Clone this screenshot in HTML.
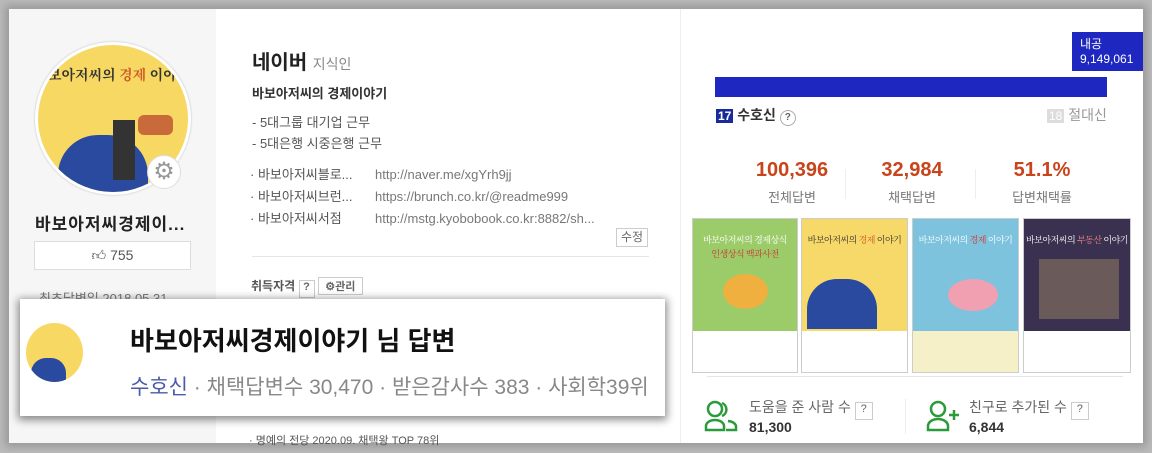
<!DOCTYPE html>
<html><head><meta charset="utf-8"><style>
*{margin:0;padding:0;box-sizing:border-box}
body{width:1152px;height:453px;overflow:hidden;background:#fff;font-family:"Liberation Sans","Noto Sans CJK KR",sans-serif;position:relative}
.frame{position:absolute;left:0;top:0;width:1152px;height:453px;background:#bbb}
.panel{position:absolute;left:9px;top:9px;width:1134px;height:434px;background:#fff;box-shadow:0 0 8px 4px #999}
.left{position:absolute;left:0;top:0;width:207px;height:434px;background:#f6f6f6}
.abs{position:absolute}
.circle{border-radius:50%;overflow:hidden;background:#f7d862}
.t{position:absolute;white-space:nowrap}
.book{position:absolute;top:209px;height:155px;border:1px solid #ccc;overflow:hidden;background:#fff}
.book .top{position:absolute;left:0;top:0;width:100%;height:112px}
.book .tt{position:absolute;top:14px;width:100%;text-align:center;font-family:"Noto Serif CJK SC",serif;font-size:9px;letter-spacing:-0.5px;line-height:14px}
.q{display:inline-block;border:1px solid #ccc;background:#fff;color:#666;font-size:11px;text-align:center}
</style></head><body>
<div class="frame"></div>
<div class="panel">
 <div class="left"></div>
 <div class="abs circle" style="left:26px;top:33px;width:156px;height:153px;border:3px solid #fff;box-shadow:0 0 2px #bbb">
  <div class="t" style="left:10px;top:20px;font-size:14px;color:#333;font-family:'Noto Serif CJK SC',serif;font-weight:bold">보아저씨의 <span style="color:#d05a2a">경제</span> 이야</div>
  <div class="abs" style="left:20px;top:90px;width:90px;height:70px;background:#2a4aa0;border-radius:40px 40px 0 0"></div>
  <div class="abs" style="left:75px;top:75px;width:22px;height:60px;background:#333"></div>
  <div class="abs" style="left:100px;top:70px;width:35px;height:20px;background:#c86a3a;border-radius:6px"></div>
 </div>
 <div class="abs" style="left:138px;top:146px;width:34px;height:34px;border-radius:50%;background:#fff;border:1px solid #ddd;color:#999;font-size:24px;text-align:center;line-height:32px">⚙</div>
 <div class="t" style="left:26px;top:201px;font-size:17px;font-weight:bold;color:#222;letter-spacing:1px">바보아저씨경제이...</div>
 <div class="abs" style="left:25px;top:232px;width:157px;height:29px;background:#fff;border:1px solid #ddd;text-align:center;font-size:14px;line-height:27px;color:#555">👍︎ 755</div>
 <div class="t" style="left:30px;top:279px;font-size:13px;color:#777">최초답변일 2018.05.31.</div>

 <div class="t" style="left:243px;top:37px;font-size:20px;font-weight:bold;color:#222">네이버 <span style="font-size:14px;font-weight:normal;color:#888">지식인</span></div>
 <div class="t" style="left:243px;top:74px;font-size:13px;font-weight:bold;color:#333">바보아저씨의 경제이야기</div>
 <div class="t" style="left:243px;top:103px;font-size:13px;color:#555;line-height:21px">- 5대그룹 대기업 근무<br>- 5대은행 시중은행 근무</div>
 <div class="t" style="left:241px;top:155px;font-size:13px;color:#555;line-height:22px">· 바보아저씨블로...<br>· 바보아저씨브런...<br>· 바보아저씨서점</div>
 <div class="t" style="left:366px;top:155px;font-size:13px;color:#777;line-height:22px">http://naver.me/xgYrh9jj<br>https://brunch.co.kr/@readme999<br>http://mstg.kyobobook.co.kr:8882/sh...</div>
 <div class="abs q" style="left:607px;top:219px;width:32px;height:19px;font-size:12px;line-height:17px">수정</div>
 <div class="abs" style="left:243px;top:247px;width:397px;height:1px;background:#e5e5e5"></div>
 <div class="t" style="left:242px;top:268px;font-size:12px;font-weight:bold;color:#555">취득자격 <span class="q" style="width:16px;height:18px">?</span> <span class="q" style="width:45px;height:18px">⚙관리</span></div>
 <div class="t" style="left:240px;top:423px;font-size:11px;color:#555">· 명예의 전당 2020.09. 채택왕 TOP 78위</div>
 <div class="abs" style="left:671px;top:0;width:1px;height:434px;background:#eee"></div>

 <div class="abs" style="left:706px;top:68px;width:392px;height:20px;background:#1e28c0"></div>
 <div class="abs" style="left:1063px;top:23px;width:71px;height:39px;background:#1e28c0;color:#fff;font-size:12px;line-height:15px;padding:5px 0 0 8px">내공<br>9,149,061</div>
 <div class="t" style="left:707px;top:96px;font-size:14px;font-weight:bold;color:#333"><span style="background:#1a2a9a;color:#fff;font-size:12px;padding:0 2px">17</span> 수호신 <span style="display:inline-block;width:16px;height:16px;border:1px solid #aaa;border-radius:50%;font-size:10px;text-align:center;line-height:14px;color:#666">?</span></div>
 <div class="t" style="left:1038px;top:96px;font-size:14px;color:#999"><span style="background:#ddd;color:#fff;font-size:12px;padding:0 2px">18</span> 절대신</div>
 <div class="t" style="left:733px;top:150px;width:100px;text-align:center;font-size:20px;font-weight:bold;color:#c8441a">100,396</div>
 <div class="t" style="left:853px;top:150px;width:100px;text-align:center;font-size:20px;font-weight:bold;color:#c8441a">32,984</div>
 <div class="t" style="left:983px;top:150px;width:100px;text-align:center;font-size:20px;font-weight:bold;color:#c8441a">51.1%</div>
 <div class="t" style="left:733px;top:178px;width:100px;text-align:center;font-size:13px;color:#777">전체답변</div>
 <div class="t" style="left:853px;top:178px;width:100px;text-align:center;font-size:13px;color:#777">채택답변</div>
 <div class="t" style="left:983px;top:178px;width:100px;text-align:center;font-size:13px;color:#777">답변채택률</div>
 <div class="abs" style="left:836px;top:160px;width:1px;height:30px;background:#eee"></div>
 <div class="abs" style="left:966px;top:160px;width:1px;height:30px;background:#eee"></div>

 <div class="book" style="left:683px;width:106px"><div class="top" style="background:#9ccc6a"></div><div class="tt" style="color:#fff">바보아저씨의 경제상식<br><span style="color:#c33">인생상식 백과사전</span></div><div class="abs" style="left:30px;top:55px;width:45px;height:35px;background:#f0b040;border-radius:50%"></div></div>
 <div class="book" style="left:792px;width:107px"><div class="top" style="background:#f7d96a"></div><div class="tt" style="color:#333">바보아저씨의 <span style="color:#d05a2a">경제</span> 이야기</div><div class="abs" style="left:5px;top:60px;width:70px;height:50px;background:#2a4aa0;border-radius:30px 30px 0 0"></div></div>
 <div class="book" style="left:903px;width:107px"><div class="top" style="background:#7ec3de"></div><div class="tt" style="color:#fff">바보아저씨의 <span style="color:#d33">경제</span> 이야기</div><div class="abs" style="left:35px;top:60px;width:50px;height:32px;background:#f0a0b0;border-radius:50%"></div><div class="abs" style="left:0;top:112px;width:100%;height:43px;background:#f5f0c8"></div></div>
 <div class="book" style="left:1014px;width:108px"><div class="top" style="background:#3a3050"></div><div class="tt" style="color:#fff">바보아저씨의 <span style="color:#e88">부동산</span> 이야기</div><div class="abs" style="left:15px;top:40px;width:80px;height:60px;background:#6a5a5a"></div></div>

 <div class="abs" style="left:698px;top:367px;width:416px;height:1px;background:#e5e5e5"></div>
 <svg class="abs" style="left:695px;top:391px" width="34" height="32" viewBox="0 0 34 32" fill="none" stroke="#2a9a3a" stroke-width="2.5"><circle cx="11" cy="9" r="7"/><path d="M2 30v-4a9 6 0 0 1 18 0v4z"/><path d="M18 3a7 7 0 0 1 0 13M24 21a9 6 0 0 1 8 5v4h-10"/></svg>
 <div class="t" style="left:740px;top:388px;font-size:14px;color:#666">도움을 준 사람 수 <span class="q" style="width:18px;height:18px">?</span></div>
 <div class="t" style="left:740px;top:410px;font-size:14px;font-weight:bold;color:#333">81,300</div>
 <div class="abs" style="left:896px;top:390px;width:1px;height:35px;background:#eee"></div>
 <svg class="abs" style="left:917px;top:389px" width="36" height="34" viewBox="0 0 36 34" fill="none" stroke="#2a9a3a" stroke-width="2.5"><circle cx="12" cy="11" r="7"/><path d="M2 32v-4a10 7 0 0 1 20 0v4z"/><path d="M28 12v10M23 17h10"/></svg>
 <div class="t" style="left:960px;top:388px;font-size:14px;color:#666">친구로 추가된 수 <span class="q" style="width:18px;height:18px">?</span></div>
 <div class="t" style="left:960px;top:410px;font-size:14px;font-weight:bold;color:#333">6,844</div>
</div>

<div class="abs" style="left:20px;top:299px;width:645px;height:117px;background:#fff;box-shadow:0 2px 8px 2px rgba(0,0,0,.45)">
 <div class="abs circle" style="left:6px;top:24px;width:57px;height:59px">
  <div class="abs" style="left:5px;top:35px;width:35px;height:25px;background:#2a4aa0;border-radius:15px 15px 0 0"></div>
 </div>
 <div class="t" style="left:110px;top:22px;font-size:26px;font-weight:bold;color:#111">바보아저씨경제이야기 님 답변</div>
 <div class="t" style="left:110px;top:72px;font-size:21px;color:#888"><span style="color:#4a5aa8">수호신</span> · 채택답변수 30,470 · 받은감사수 383 · 사회학39위</div>
</div>
</body></html>
